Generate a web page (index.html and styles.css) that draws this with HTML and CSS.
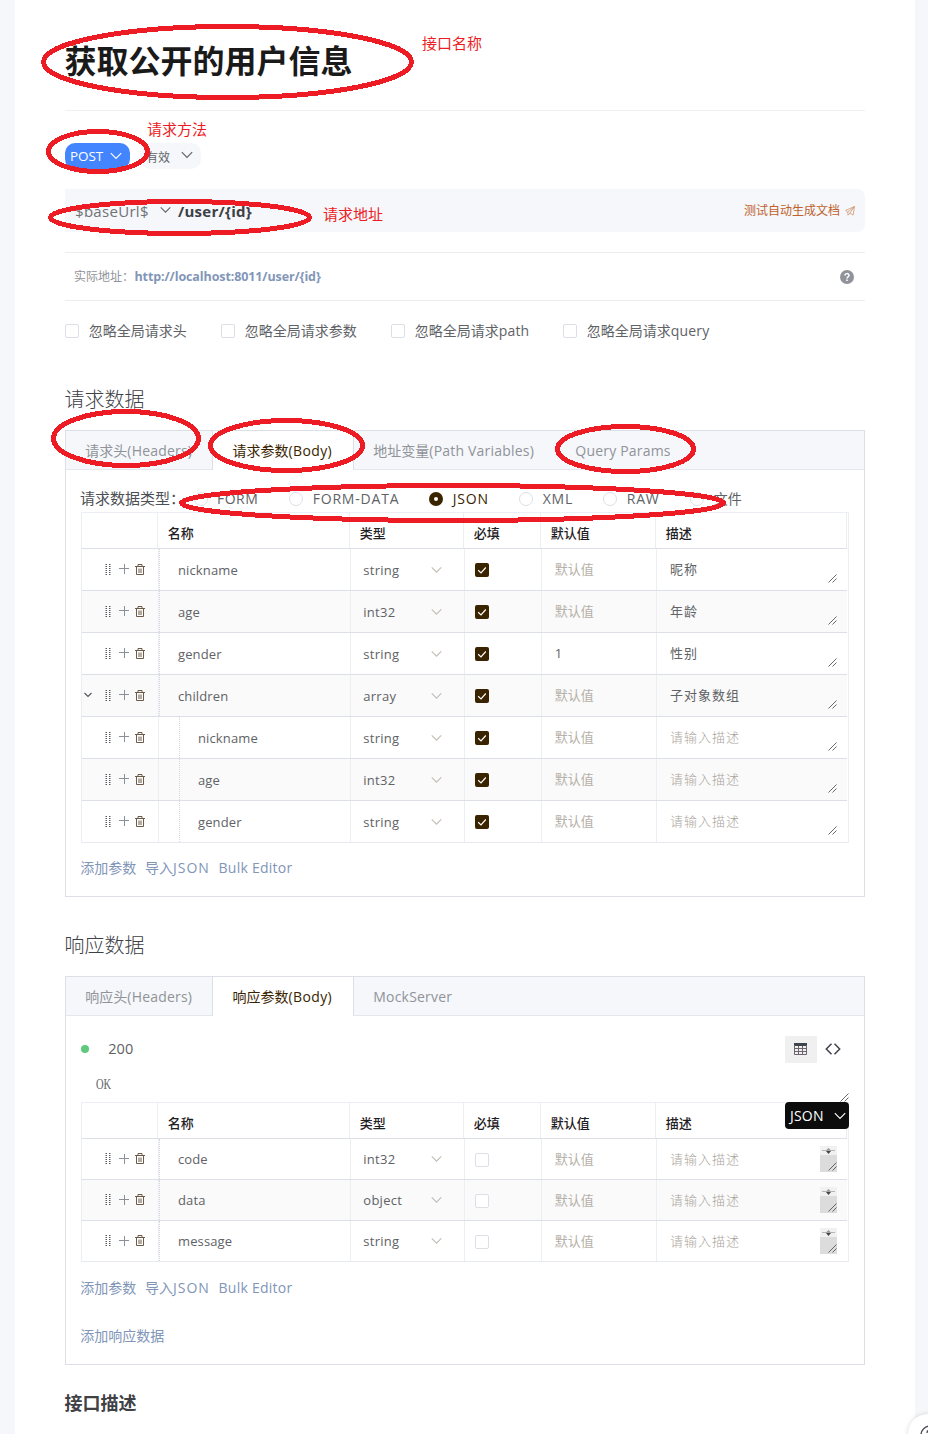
FILE: index.html
```html
<!DOCTYPE html>
<html lang="zh-CN">
<head>
<meta charset="utf-8">
<title>获取公开的用户信息</title>
<link rel="stylesheet" href="styles.css">
</head>
<body>
<svg class="defs" width="0" height="0">
  <symbol id="chev" viewBox="0 0 12 8"><path d="M.8 1.2 6 6.4l5.2-5.2" fill="none" stroke="currentColor" stroke-width="1.1"/></symbol>
  <symbol id="drag" viewBox="0 0 6 11"><path d="M.5 0h1.500v1H.5zM4 0h1.500v1H4zM.5 2h1.500v1H.5zM4 2h1.500v1H4zM.5 4h1.500v1H.5zM4 4h1.500v1H4zM.5 6h1.500v1H.5zM4 6h1.500v1H4zM.5 8h1.500v1H.5zM4 8h1.500v1H4zM.5 10h1.500v1H.5zM4 10h1.500v1H4z" fill="#55585e"/></symbol>
  <symbol id="plus" viewBox="0 0 10 10"><path d="M0 4.5h10M5.500 0v10" stroke="#8b8f96" fill="none"/></symbol>
  <symbol id="bin" viewBox="0 0 10 11"><path d="M0 2.5h10M3 2.500v-2h4v2M1.5 2.500v8h7v-8M4 4.500v4.500M6 4.500v4.500" fill="none" stroke="#6b5a48"/></symbol>
  <symbol id="grip" viewBox="0 0 9 9"><path d="M.5 8.5l8-8M4.5 8.5l4-4" fill="none" stroke="#55585c" stroke-width=".9"/></symbol>
  <symbol id="tick" viewBox="0 0 14 14"><path d="M3.2 7.2 6 9.9l4.8-5.4" fill="none" stroke="#fff" stroke-width="1.2"/></symbol>
</svg>
<main class="page">
  <h1 class="title">获取公开的用户信息</h1>
  <div class="pills">
    <span class="pill post"><span class="en">POST</span><svg class="chev"><use href="#chev"/></svg></span>
    <span class="pill state"><span>有效</span><svg class="chev"><use href="#chev"/></svg></span>
  </div>
  <div class="url">
    <span class="base">$baseUrl$</span><svg class="chev"><use href="#chev"/></svg><b class="path">/user/{id}</b>
    <span class="doc">测试自动生成文档</span>
    <svg class="plane" viewBox="0 0 10 10"><path d="M.6 4.4 9.4.6 8.2 9 4.8 7.2 3 9.2 2.8 6zM2.8 6 9.4.6 4.8 7.2" fill="none" stroke="#cf8a62" stroke-width=".7"/></svg>
  </div>
  <div class="real"><span>实际地址：</span><b>http://localhost:8011/user/{id}</b>
    <svg class="help" viewBox="0 0 14 14"><circle cx="7" cy="7" r="7" fill="#909399"/><path d="M5 5.6C5 3 9 3 9 5.4 9 6.8 7 6.8 7 8.4" fill="none" stroke="#fff" stroke-width="1.5"/><path d="M6.2 9.6h1.6v1.5H6.2z" fill="#fff"/></svg>
  </div>
  <div class="ignore">
    <label class="opt o1"><i class="box"></i>忽略全局请求头</label>
    <label class="opt o2"><i class="box"></i>忽略全局请求参数</label>
    <label class="opt o3"><i class="box"></i>忽略全局请求<span class="en">path</span></label>
    <label class="opt"><i class="box"></i>忽略全局请求<span class="en">query</span></label>
  </div>

  <h2 class="section">请求数据</h2>
  <section class="panel request">
    <nav class="tabs">
      <a class="tab t1">请求头<span class="en">(Headers)</span></a>
      <a class="tab t2 active">请求参数<span class="en">(Body)</span></a>
      <a class="tab t3">地址变量<span class="en">(Path Variables)</span></a>
      <a class="tab t4"><span class="en">Query Params</span></a>
    </nav>
    <div class="types">
      <span class="label">请求数据类型：</span>
      <label class="radio r1"><i></i><span class="en">FORM</span></label>
      <label class="radio r2"><i></i><span class="en">FORM-DATA</span></label>
      <label class="radio r3 on"><i></i><span class="en">JSON</span></label>
      <label class="radio r4"><i></i><span class="en">XML</span></label>
      <label class="radio r5"><i></i><span class="en">RAW</span></label>
      <label class="radio r6"><i></i>文件</label>
    </div>
    <div class="table">
      <div class="head"><span></span><span>名称</span><span>类型</span><span>必填</span><span>默认值</span><span>描述</span></div>
      <div class="row">
        <div class="acts"><svg class="drag"><use href="#drag"/></svg><svg class="plus"><use href="#plus"/></svg><svg class="bin"><use href="#bin"/></svg></div>
        <div class="name"><span>nickname</span></div><div class="type"><span>string</span><svg class="chev"><use href="#chev"/></svg></div>
        <div class="req"><svg class="box on"><use href="#tick"/></svg></div><div class="def ph">默认值</div>
        <div class="desc">昵称<svg class="grip"><use href="#grip"/></svg></div>
      </div>
      <div class="row alt">
        <div class="acts"><svg class="drag"><use href="#drag"/></svg><svg class="plus"><use href="#plus"/></svg><svg class="bin"><use href="#bin"/></svg></div>
        <div class="name"><span>age</span></div><div class="type"><span>int32</span><svg class="chev"><use href="#chev"/></svg></div>
        <div class="req"><svg class="box on"><use href="#tick"/></svg></div><div class="def ph">默认值</div>
        <div class="desc">年龄<svg class="grip"><use href="#grip"/></svg></div>
      </div>
      <div class="row">
        <div class="acts"><svg class="drag"><use href="#drag"/></svg><svg class="plus"><use href="#plus"/></svg><svg class="bin"><use href="#bin"/></svg></div>
        <div class="name"><span>gender</span></div><div class="type"><span>string</span><svg class="chev"><use href="#chev"/></svg></div>
        <div class="req"><svg class="box on"><use href="#tick"/></svg></div><div class="def">1</div>
        <div class="desc">性别<svg class="grip"><use href="#grip"/></svg></div>
      </div>
      <div class="row alt">
        <div class="acts"><svg class="fold" viewBox="0 0 8 6"><path d="M.5 1 4 4.5 7.5 1" fill="none" stroke="#55585c" stroke-width="1.2"/></svg><svg class="drag"><use href="#drag"/></svg><svg class="plus"><use href="#plus"/></svg><svg class="bin"><use href="#bin"/></svg></div>
        <div class="name"><span>children</span></div><div class="type"><span>array</span><svg class="chev"><use href="#chev"/></svg></div>
        <div class="req"><svg class="box on"><use href="#tick"/></svg></div><div class="def ph">默认值</div>
        <div class="desc">子对象数组<svg class="grip"><use href="#grip"/></svg></div>
      </div>
      <div class="row child">
        <div class="acts"><svg class="drag"><use href="#drag"/></svg><svg class="plus"><use href="#plus"/></svg><svg class="bin"><use href="#bin"/></svg></div>
        <div class="name"><span>nickname</span></div><div class="type"><span>string</span><svg class="chev"><use href="#chev"/></svg></div>
        <div class="req"><svg class="box on"><use href="#tick"/></svg></div><div class="def ph">默认值</div>
        <div class="desc ph">请输入描述<svg class="grip"><use href="#grip"/></svg></div>
      </div>
      <div class="row alt child">
        <div class="acts"><svg class="drag"><use href="#drag"/></svg><svg class="plus"><use href="#plus"/></svg><svg class="bin"><use href="#bin"/></svg></div>
        <div class="name"><span>age</span></div><div class="type"><span>int32</span><svg class="chev"><use href="#chev"/></svg></div>
        <div class="req"><svg class="box on"><use href="#tick"/></svg></div><div class="def ph">默认值</div>
        <div class="desc ph">请输入描述<svg class="grip"><use href="#grip"/></svg></div>
      </div>
      <div class="row child">
        <div class="acts"><svg class="drag"><use href="#drag"/></svg><svg class="plus"><use href="#plus"/></svg><svg class="bin"><use href="#bin"/></svg></div>
        <div class="name"><span>gender</span></div><div class="type"><span>string</span><svg class="chev"><use href="#chev"/></svg></div>
        <div class="req"><svg class="box on"><use href="#tick"/></svg></div><div class="def ph">默认值</div>
        <div class="desc ph">请输入描述<svg class="grip"><use href="#grip"/></svg></div>
      </div>
    </div>
    <div class="links"><a>添加参数</a><a>导入<span class="en json">JSON</span></a><a class="en">Bulk Editor</a></div>
  </section>

  <h2 class="section second">响应数据</h2>
  <section class="panel response">
    <nav class="tabs">
      <a class="tab t1">响应头<span class="en">(Headers)</span></a>
      <a class="tab t2 active">响应参数<span class="en">(Body)</span></a>
      <a class="tab t3"><span class="en">MockServer</span></a>
    </nav>
    <div class="status">
      <i class="dot"></i><span class="code">200</span>
      <span class="view"><svg class="grid" viewBox="0 0 13 12"><path d="M0 0h13v3H0z" fill="#3f444c"/><path d="M.5 2v9.5h12V2M.5 5.5h12M.5 8.5h12M4.500 3v8.5M8.500 3v8.5" fill="none" stroke="#6b6570"/></svg></span>
      <svg class="codeicon" viewBox="0 0 16 12"><path d="M6.5.7 1.3 6l5.2 5.3M9.5.7 14.7 6l-5.2 5.3" fill="none" stroke="#3f444c" stroke-width="1.5"/></svg>
    </div>
    <div class="note"><span>OK</span><svg class="grip"><use href="#grip"/></svg></div>
    <div class="table">
      <div class="format"><span class="en">JSON</span><svg class="chev"><use href="#chev"/></svg></div>
      <div class="head"><span></span><span>名称</span><span>类型</span><span>必填</span><span>默认值</span><span>描述</span></div>
      <div class="row">
        <div class="acts"><svg class="drag"><use href="#drag"/></svg><svg class="plus"><use href="#plus"/></svg><svg class="bin"><use href="#bin"/></svg></div>
        <div class="name"><span>code</span></div><div class="type"><span>int32</span><svg class="chev"><use href="#chev"/></svg></div>
        <div class="req"><i class="box"></i></div><div class="def ph">默认值</div>
        <div class="desc ph">请输入描述<span class="scroll"><svg class="spin" viewBox="0 0 13 6"><path d="M0 2.5h13" stroke="#b5b5b5"/><path d="M6.5 0 9 2.5H4z" fill="#999"/><path d="M4 3h5L6.5 6z" fill="#444"/></svg><svg class="grip"><use href="#grip"/></svg></span></div>
      </div>
      <div class="row alt">
        <div class="acts"><svg class="drag"><use href="#drag"/></svg><svg class="plus"><use href="#plus"/></svg><svg class="bin"><use href="#bin"/></svg></div>
        <div class="name"><span>data</span></div><div class="type"><span>object</span><svg class="chev"><use href="#chev"/></svg></div>
        <div class="req"><i class="box"></i></div><div class="def ph">默认值</div>
        <div class="desc ph">请输入描述<span class="scroll"><svg class="spin" viewBox="0 0 13 6"><path d="M0 2.5h13" stroke="#b5b5b5"/><path d="M6.5 0 9 2.5H4z" fill="#999"/><path d="M4 3h5L6.5 6z" fill="#444"/></svg><svg class="grip"><use href="#grip"/></svg></span></div>
      </div>
      <div class="row">
        <div class="acts"><svg class="drag"><use href="#drag"/></svg><svg class="plus"><use href="#plus"/></svg><svg class="bin"><use href="#bin"/></svg></div>
        <div class="name"><span>message</span></div><div class="type"><span>string</span><svg class="chev"><use href="#chev"/></svg></div>
        <div class="req"><i class="box"></i></div><div class="def ph">默认值</div>
        <div class="desc ph">请输入描述<span class="scroll"><svg class="spin" viewBox="0 0 13 6"><path d="M0 2.5h13" stroke="#b5b5b5"/><path d="M6.5 0 9 2.5H4z" fill="#999"/><path d="M4 3h5L6.5 6z" fill="#444"/></svg><svg class="grip"><use href="#grip"/></svg></span></div>
      </div>
    </div>
    <div class="links"><a>添加参数</a><a>导入<span class="en json">JSON</span></a><a class="en">Bulk Editor</a></div>
    <div class="links more"><a>添加响应数据</a></div>
  </section>
  <h3 class="about">接口描述</h3>
</main>

<div class="float"><svg viewBox="0 0 20 20"><circle cx="10" cy="10" r="9" fill="none" stroke="#4a4d55" stroke-width="1.4"/><path d="M7 8c0-4 6-4 6 0 0 2-3 2-3 4.500" fill="none" stroke="#4a4d55" stroke-width="1.400"/></svg></div>

<svg class="marks" viewBox="0 0 928 1434">
  <ellipse cx="227.500" cy="62" rx="184" ry="35.500"/>
  <ellipse cx="98" cy="151.500" rx="49.500" ry="20"/>
  <ellipse cx="180" cy="217.500" rx="129.500" ry="16"/>
  <ellipse cx="126" cy="438.500" rx="72.500" ry="27"/>
  <ellipse cx="286.500" cy="445.500" rx="76" ry="25"/>
  <ellipse cx="625.500" cy="449" rx="68" ry="22.500"/>
  <ellipse cx="452.500" cy="503" rx="271" ry="17.500"/>
</svg>
<span class="memo m1">接口名称</span>
<span class="memo m2">请求方法</span>
<span class="memo m3">请求地址</span>
</body>
</html>
```
FILE: styles.css
```css
* { box-sizing: border-box; }
body {
  margin: 0; width: 928px; height: 1434px; overflow: hidden; position: relative;
  background: #f5f7fa; color: #606266;
  font: 14px/20px "Open Sans", "Noto Sans CJK SC", sans-serif;
}
svg { display: block; flex: none; }
.defs { position: absolute; }
.en { letter-spacing: .2px; }
.page { width: 900px; height: 1434px; margin-left: 15px; padding: 0 50px; background: #fff; }
h1, h2, h3 { margin: 0; }
.chev { width: 12px; height: 8px; }

.title { height: 111px; padding-top: 38px; border-bottom: 1px solid #f0f0f1; font-size: 32px; line-height: 46px; color: #1a1a1a; text-indent: -.5px; }

.pills { display: flex; gap: 10px; margin-top: 32px; }
.pill { display: flex; align-items: center; height: 26px; border-radius: 10px; }
.post { width: 65px; padding-left: 5px; gap: 6px; background: #4385ff; color: #fff; font-size: 13.500px; }
.post .en { width: 34px; letter-spacing: -.1px; }
.state { width: 61px; padding-left: 6px; gap: 11px; background: #f5f7fa; font-size: 12px; }
.state span { padding-top: 3px; }
.state .chev { margin-bottom: 2px; }

.url { display: flex; align-items: center; height: 43px; margin-top: 20px; padding: 0 10px; background: #f5f7fa; border-radius: 0 8px 8px 0; }
.base { width: 85px; font-size: 15px; letter-spacing: .3px; color: #707276; }
.url .chev { width: 11px; margin-bottom: 2px; }
.path { margin-left: 7px; font-size: 15px; letter-spacing: .27px; color: #3d4045; }
.doc { margin-left: auto; font-size: 12px; color: #c0602b; }
.plane { width: 10px; height: 10px; margin-left: 5px; }

.real { display: flex; align-items: center; height: 49px; margin-top: 20px; padding: 0 11.500px 0 9px; border: 1px solid #ebecee; border-width: 1px 0; font-size: 12px; color: #909399; }
.real span { width: 60.500px; white-space: nowrap; }
.real b { font-size: 12.500px; letter-spacing: -.1px; color: #8296b8; }
.help { width: 14px; height: 14px; margin-left: auto; }

.ignore { display: flex; height: 20px; margin-top: 20px; }
.opt { display: flex; align-items: center; white-space: nowrap; }
.o1 { width: 156px; }
.o2 { width: 170px; }
.o3 { width: 172px; }
.box { display: block; width: 14px; height: 14px; border: 1px solid #dcdfe6; border-radius: 2px; background: #fff; }
.opt .box { margin-right: 9.700px; }
.box.on { background: #3a2400; border: 0; }

.section { margin: 44px 0 15px -.5px; font-size: 20px; line-height: 30px; font-weight: 300; color: #3d4045; }
.section.second { margin-top: 34px; }
.panel { border: 1px solid #dcdfe6; }
.request { height: 467px; }
.response { height: 389px; }

.tabs { display: flex; height: 39px; background: #f5f7fa; border-bottom: 1px solid #e4e7ed; line-height: 39px; color: #909399; }
.tab { padding-left: 19.300px; white-space: nowrap; height: 39px; }
.t1 { width: 146px; }
.t2 { width: 142px; }
.t3 { width: 202px; }
.tab.active { padding-left: 19.600px; background: #fff; color: #3a2400; border: 1px solid #dcdfe6; border-width: 0 1px; }
.active .en { letter-spacing: .35px; }

.types { display: flex; align-items: center; height: 20px; margin: 19px 15px 3px; position: relative; }
.label { width: 113px; font-size: 15px; color: #4c4f54; white-space: nowrap; text-indent: -1px; margin-top: -2px; }
.radio { display: flex; align-items: center; gap: 9.700px; white-space: nowrap; }
.radio .en { letter-spacing: .8px; }
.radio i { width: 14px; height: 14px; flex: none; border: 1px solid #dcdfe6; border-radius: 50%; background: #fff; }
.radio.on { color: #3a2400; }
.radio.on i { border: 5px solid #3a2400; }
.r1 { width: 95px; }
.radio.r1 { gap: 9px; }
.r1 .en { letter-spacing: .5px; }
.r2 { width: 140px; }
.r3 { width: 90px; }
.r4 { width: 84px; }
.r5 { width: 87px; }

.table { position: relative; width: 768px; margin-left: 15px; border: 1px solid #ebeef5; border-bottom-color: #e6e9f0; font-size: 13px; }
.head { display: grid; grid-template-columns: 76px 192px 114px 77px 115px 191px; height: 36px; border-bottom: 1px solid #dcdfe6; width: 765px; color: #1f2023; font-weight: 500; line-height: 41px; }
.head span { height: 35px; border-right: 1px solid #ebeef5; padding-left: 9.700px; }
.row { display: grid; grid-template-columns: 77px 192px 114px 77px 115px 190px; height: 42px; width: 765px; border-bottom: 1px solid #dcdfe6; }
.response .row { height: 41px; }
.row:last-child { height: 41px; border-bottom: 0; }
.response .row:last-child { height: 40px; }
.row > div { display: flex; align-items: center; border-right: 1px solid #ebeef5; }
.row > .desc { border-right: 0; }
.alt { background: #fafafa; }
.row > .acts { position: relative; padding: 0 0 1px 23px; }
.drag { width: 6px; height: 11px; }
.plus { width: 10px; height: 10px; margin-left: 8px; }
.bin { width: 10px; height: 11px; margin-left: 6px; }
.fold { position: absolute; left: 2px; top: 17px; width: 8px; height: 6px; }
.name span { flex: none; display: flex; align-items: center; height: 100%; width: 100%; padding: 1px 0 0 18px; border-left: 1px dotted #d5d7dc; letter-spacing: .12px; }
.child .name span { width: 171px; margin-left: 20px; }
.type { padding: 1px 0 0 12.300px; }
.type span { width: 67.700px; letter-spacing: .27px; }
.response .name span, .response .type { padding-top: 0; padding-bottom: 1px; }
.type .chev { color: #c0bcb4; width: 11px; margin-bottom: 1px; }
.response .type .chev { margin-bottom: 0; }
.req { padding-left: 10px; }
.response .req { padding-top: 1px; }
.def { padding: 0 0 1px 12.700px; }
.ph { color: #b5b0a8; }
.desc { position: relative; padding: 0 0 2px 13px; letter-spacing: 1px; }
.response .desc { padding-bottom: 1px; }
.desc.ph { font-weight: 300; color: #aaa59b; }
.grip { width: 9px; height: 9px; }
.desc > .grip { position: absolute; right: 10px; bottom: 7.500px; }
.scroll { position: absolute; right: 10px; top: 7px; width: 17px; height: 26px; border-top: 9px solid #f1f1f1; background: #dcdcdc; }
.spin { position: absolute; left: 2px; top: -7px; width: 13px; height: 6px; }
.scroll .grip { position: absolute; right: 0; bottom: 1px; }

.links { display: flex; gap: 8.700px; margin: 15px 0 0 14.300px; color: #8095b8; }
.links .en { letter-spacing: .25px; }
.links .json { letter-spacing: 1px; }
.response .links { margin-top: 16px; }
.response .more { margin-top: 28px; }

.status { display: flex; align-items: center; height: 27px; margin: 20px 15px 0; }
.dot { width: 8px; height: 8px; margin-top: -1px; border-radius: 50%; background: #5fca7d; }
.code { margin: -2px 0 0 19.300px; font-size: 14.500px; }
.view { display: flex; align-items: center; justify-content: center; width: 32px; height: 27px; margin-left: auto; padding: 0 1px 1px 0; background: #f0f0f0; }
.grid { width: 13px; height: 12px; }
.codeicon { width: 16px; height: 12px; margin: -1px 8.500px 0 7.500px; }
.note { display: flex; align-items: flex-end; justify-content: space-between; height: 39px; margin: 0 15px 0 29.500px; }
.note span { font: 14px/20px "Liberation Serif", serif; transform: scaleX(.75); transform-origin: 0 0; margin-bottom: 7px; }
.format { position: absolute; right: -1px; top: -1px; width: 64px; height: 27px; display: flex; align-items: center; padding-left: 5px; gap: 10px; background: #0c0c0c; border-radius: 4px; color: #fff; font-size: 14px; }
.format .en { width: 34px; letter-spacing: .2px; }

.about { margin: 25px 0 0 -.5px; font-size: 18px; line-height: 27px; color: #3f4145; }
.float { position: absolute; left: 908px; top: 1414px; width: 40px; height: 40px; border-radius: 50%; background: #fff; box-shadow: 0 0 5px rgba(0,0,0,.15); }
.float svg { width: 20px; height: 20px; margin: 11px 0 0 12px; }
.marks { position: absolute; left: 0; top: 0; width: 928px; height: 1434px; fill: none; stroke: #ed1c24; stroke-width: 5; shape-rendering: crispEdges; }
.memo { position: absolute; color: #ed1c24; font-size: 15px; }
.m1 { left: 422px; top: 33px; }
.m2 { left: 147px; top: 119px; }
.m3 { left: 323px; top: 204px; }
```
